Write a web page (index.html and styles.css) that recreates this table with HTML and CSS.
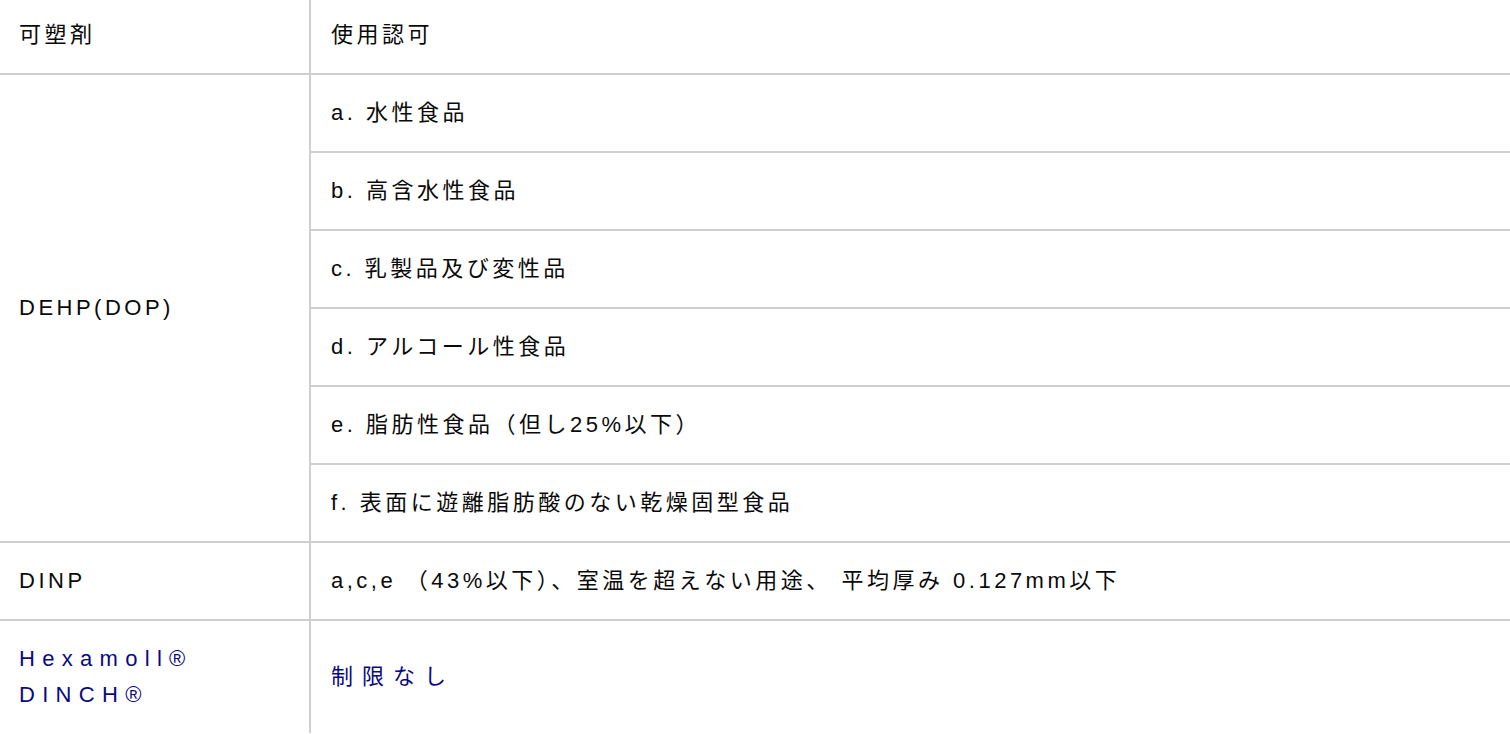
FILE: index.html
```html
<!DOCTYPE html>
<html lang="ja">
<head>
<meta charset="utf-8">
<link rel="stylesheet" href="styles.css">
</head>
<body>
<table class="spec">
  <tr class="head">
    <td class="c1">可塑剤</td>
    <td class="c2">使用認可</td>
  </tr>
  <tr>
    <td class="c1" rowspan="6">DEHP(DOP)</td>
    <td class="c2">a. 水性食品</td>
  </tr>
  <tr><td class="c2">b. 高含水性食品</td></tr>
  <tr><td class="c2">c. 乳製品及び変性品</td></tr>
  <tr><td class="c2">d. アルコール性食品</td></tr>
  <tr><td class="c2">e. 脂肪性食品（但し25%以下）</td></tr>
  <tr><td class="c2">f. 表面に遊離脂肪酸のない乾燥固型食品</td></tr>
  <tr>
    <td class="c1">DINP</td>
    <td class="c2">a,c,e （43%以下）、室温を超えない用途、 平均厚み 0.127mm以下</td>
  </tr>
  <tr class="brand">
    <td class="c1">Hexamoll®<br>DINCH®</td>
    <td class="c2">制限なし</td>
  </tr>
</table>
</body>
</html>
```

FILE: styles.css
```css
html, body {
  margin: 0;
  padding: 0;
  background: #fff;
}
body {
  font-family: "Liberation Sans", "Noto Sans CJK JP", sans-serif;
  font-size: 22px;
  color: #0a0a0a;
  overflow: hidden;
}
.spec {
  width: 100%;
  border-collapse: collapse;
}
.spec td {
  padding: 20px 20px;
  line-height: 36px;
  letter-spacing: 3.5px;
  border-bottom: 2px solid #cfcfcf;
  vertical-align: middle;
  text-align: left;
}
.spec .c1 {
  width: 270px;
  padding-left: 19px;
}
.spec .c2 {
  border-left: 2px solid #cfcfcf;
}
.spec .head td {
  padding-top: 17px;
  padding-bottom: 20px;
}
.spec .brand td {
  color: #0a0a80;
  letter-spacing: 7.3px;
  border-bottom: none;
}
.spec .brand .c2 {
  letter-spacing: 9px;
}
```
